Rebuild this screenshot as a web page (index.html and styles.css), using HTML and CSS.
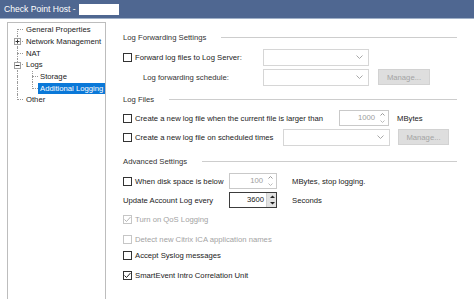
FILE: index.html
```html
<!DOCTYPE html>
<html>
<head>
<meta charset="utf-8">
<link rel="stylesheet" href="styles.css">
</head>
<body>
<div class="title"><span class="title-text">Check Point Host -</span><span class="title-box"></span></div>
<div class="main">
  <div class="tree">
    <div class="node"><div class="cell first"><i class="t"></i><i class="b"></i></div><span class="label">General Properties</span></div>
    <div class="node"><div class="cell tee"><i class="t"></i><i class="b"></i><svg class="exp" width="7" height="7"><rect x=".5" y=".5" width="6" height="6" fill="#fff" stroke="#a0a0a0"/><path d="M1.5 3.5h4M3.5 1.5v4" stroke="#333"/></svg></div><span class="label">Network Management</span></div>
    <div class="node"><div class="cell tee"><i class="t"></i><i class="b"></i></div><span class="label">NAT</span></div>
    <div class="node"><div class="cell tee"><i class="t"></i><i class="b"></i><svg class="exp" width="7" height="7"><rect x=".5" y=".5" width="6" height="6" fill="#fff" stroke="#a0a0a0"/><path d="M1.5 3.5h4" stroke="#333"/></svg></div><span class="label">Logs</span></div>
    <div class="node"><div class="cell pass"><i class="t"></i><i class="b"></i></div><div class="cell tee"><i class="t"></i><i class="b"></i></div><span class="label sub">Storage</span></div>
    <div class="node"><div class="cell pass"><i class="t"></i><i class="b"></i></div><div class="cell ell"><i class="t"></i><i class="b"></i></div><span class="label sub selected">Additional Logging</span></div>
    <div class="node"><div class="cell ell"><i class="t"></i><i class="b"></i></div><span class="label">Other</span></div>
  </div>

  <div class="content">
    <div class="section"><span>Log Forwarding Settings</span><div class="rule"></div></div>

    <div class="row mt4">
      <div class="lbl w140"><span class="cb"></span>Forward log files to Log Server:</div>
      <div class="combo w106"><svg class="chev" width="7" height="4"><path d="M.5 .5l3 3 3-3" fill="none" stroke="#a8a8a8"/></svg></div>
    </div>
    <div class="row mt4">
      <div class="lbl w140 indent">Log forwarding schedule:</div>
      <div class="combo w106"><svg class="chev" width="7" height="4"><path d="M.5 .5l3 3 3-3" fill="none" stroke="#a8a8a8"/></svg></div>
      <div class="btn w52 ml9">Manage...</div>
    </div>

    <div class="section mt6"><span>Log Files</span><div class="rule"></div></div>

    <div class="row mt3">
      <div class="lbl w216"><span class="cb"></span>Create a new log file when the current file is larger than</div>
      <div class="spin w50"><span class="val dim">1000</span><div class="arrows"><svg width="11" height="7"><path d="M3.5 4.5l2-2 2 2" fill="none" stroke="#999"/></svg><svg width="11" height="7"><path d="M3.5 2.5l2 2 2-2" fill="none" stroke="#bbb"/></svg></div></div>
      <span class="unit ml8">MBytes</span>
    </div>
    <div class="row mt3">
      <div class="lbl w160"><span class="cb"></span>Create a new log file on scheduled times</div>
      <div class="combo w107"><svg class="chev" width="7" height="4"><path d="M.5 .5l3 3 3-3" fill="none" stroke="#a8a8a8"/></svg></div>
      <div class="btn w51 ml8">Manage...</div>
    </div>

    <div class="section mt8"><span>Advanced Settings</span><div class="rule"></div></div>

    <div class="row mt4">
      <div class="lbl w106"><span class="cb"></span>When disk space is below</div>
      <div class="spin w48"><span class="val dim">100</span><div class="arrows"><svg width="11" height="7"><path d="M3.5 4.5l2-2 2 2" fill="none" stroke="#999"/></svg><svg width="11" height="7"><path d="M3.5 2.5l2 2 2-2" fill="none" stroke="#bbb"/></svg></div></div>
      <span class="unit ml15">MBytes, stop logging.</span>
    </div>
    <div class="row mt3">
      <div class="lbl w106">Update Account Log every</div>
      <div class="spin w48 active"><span class="val">3600</span><div class="arrows btns"><svg width="10" height="7"><path d="M3 5h5L5.5 2.5z" fill="#222"/></svg><svg width="10" height="7"><path d="M3 2h5L5.5 4.5z" fill="#222"/></svg></div></div>
      <span class="unit ml15">Seconds</span>
    </div>

    <div class="row mt3 disabled">
      <div class="lbl"><span class="cb"><svg width="7" height="7"><path d="M.5 3.5l2 2 4-4.5" fill="none" stroke="#b5b5b5"/></svg></span>Turn on QoS Logging</div>
    </div>
    <div class="row mt4 disabled">
      <div class="lbl"><span class="cb"></span>Detect new Citrix ICA application names</div>
    </div>
    <div class="row">
      <div class="lbl"><span class="cb"></span>Accept Syslog messages</div>
    </div>
    <div class="row mt4">
      <div class="lbl"><span class="cb"><svg width="7" height="7"><path d="M.5 3.5l2 2 4-4.5" fill="none" stroke="#222"/></svg></span>SmartEvent Intro Correlation Unit</div>
    </div>
  </div>
</div>
</body>
</html>
```

FILE: styles.css
```css
* { box-sizing: border-box; }
html, body { margin: 0; padding: 0; }
body {
  width: 474px;
  height: 299px;
  overflow: hidden;
  background: #fff;
  font-family: "Liberation Sans", Arial, sans-serif;
  font-size: 7.7px;
  color: #222;
}

/* title bar */
.title {
  height: 19px;
  background: #4f6791;
  border-bottom: 1px solid #9fb0c8;
  display: flex;
  align-items: center;
  padding-left: 4px;
}
.title-text {
  color: #fff;
  font-size: 8.6px;
}
.title-box {
  width: 40px;
  height: 11px;
  background: #fff;
  margin-left: 3px;
}

.main {
  display: flex;
  align-items: flex-start;
}

/* tree */
.tree {
  margin: 3px 0 0 7px;
  width: 99px;
  height: 277px;
  border: 1px solid #bdbdbd;
  border-bottom: none;
  padding-top: 1px;
}
.node {
  height: 11.67px;
  display: flex;
  align-items: center;
}
.cell {
  width: 15px;
  height: 100%;
  padding-left: 9px;
  display: flex;
  flex-direction: column;
  position: relative;
  flex: none;
}
.cell i { flex: 1; display: block; }
.tee .t, .pass .t, .pass .b, .ell .t { border-left: 1px dotted #9a9a9a; }
.tee .b { border-left: 1px dotted #9a9a9a; border-top: 1px dotted #9a9a9a; }
.first .b { border-left: 1px dotted #9a9a9a; border-top: 1px dotted #9a9a9a; }
.ell .t { border-bottom: 1px dotted #9a9a9a; }
.exp {
  position: absolute;
  left: 6px;
  top: calc(50% - 3px);
}
.label {
  margin-left: 1px;
  padding: 0 2px;
  white-space: nowrap;
  line-height: 11px;
  color: #222;
}
.label.sub { margin-left: 0; }
.label.selected {
  background: #0a78d8;
  color: #fff;
}

/* content */
.content {
  margin-left: 17px;
  width: 334px;
  padding-top: 10px;
}
.section {
  display: flex;
  align-items: center;
  height: 16px;
  color: #333;
}
.rule {
  flex: 1;
  height: 1px;
  background: #cdcdcd;
  margin-left: 15px;
}
.row {
  display: flex;
  align-items: center;
  height: 16px;
  white-space: nowrap;
}
.mt3 { margin-top: 3px; }
.mt4 { margin-top: 4px; }
.mt6 { margin-top: 6px; }
.mt8 { margin-top: 8px; }
.ml8 { margin-left: 8px; }
.ml9 { margin-left: 9px; }
.ml15 { margin-left: 15px; }

.lbl {
  display: flex;
  align-items: center;
  flex: none;
}
.w140 { width: 140px; }
.w216 { width: 216px; }
.w160 { width: 160px; }
.w106 { width: 106px; }
.w107 { width: 107px; }
.w48 { width: 48px; }
.w50 { width: 50px; }
.w51 { width: 51px; }
.w52 { width: 52px; }
.indent { padding-left: 20px; color: #333; }

.cb {
  width: 9px;
  height: 9px;
  border: 1px solid #333;
  background: #fff;
  margin-right: 3px;
  display: flex;
  align-items: center;
  justify-content: center;
  flex: none;
}
.disabled { color: #a3a3a3; }
.disabled .cb { border-color: #c6c6c6; }

.combo {
  height: 17px;
  border: 1px solid #d6d6d6;
  background: #fff;
  display: flex;
  align-items: center;
  justify-content: flex-end;
  padding-right: 5px;
  flex: none;
}
.btn {
  height: 16px;
  background: #dedede;
  border: 1px solid #d2d2d2;
  color: #a4a4a4;
  display: flex;
  align-items: center;
  justify-content: center;
  flex: none;
}

.spin {
  height: 16px;
  border: 1px solid #c9c9c9;
  background: #fff;
  display: flex;
  flex: none;
}
.spin.active { border-color: #3c3c3c; }
.val {
  flex: 1;
  text-align: right;
  padding-right: 2px;
  line-height: 14px;
}
.val.dim { color: #9c9c9c; }
.arrows {
  width: 11px;
  display: flex;
  flex-direction: column;
  justify-content: center;
}
.arrows svg { display: block; }
.arrows.btns {
  width: 10px;
  background: #e2e2e2;
  border-left: 1px solid #cfcfcf;
}
.unit { color: #222; }
```
